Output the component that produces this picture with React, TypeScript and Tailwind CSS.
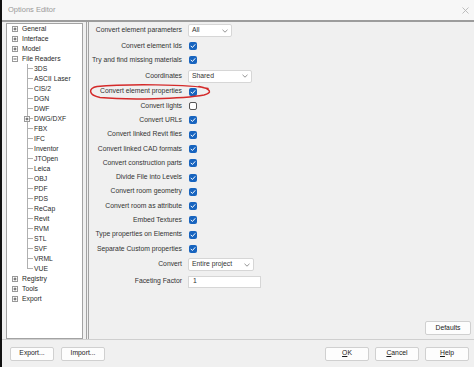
import React from "react"

const children = [
    "3DS", "ASCII Laser", "CIS/2", "DGN", "DWF", "DWG/DXF", "FBX", "IFC", "Inventor", "JTOpen",
    "Leica", "OBJ", "PDF", "PDS", "ReCap", "Revit", "RVM", "STL", "SVF", "VRML", "VUE",
]

type Row =
    | { kind: "check"; label: string; checked: boolean }
    | { kind: "select"; label: string; value: string; width: string }
    | { kind: "input"; label: string; value: string }

const rows: Row[] = [
    { kind: "select", label: "Convert element parameters", value: "All", width: "w-[44px]" },
    { kind: "check", label: "Convert element Ids", checked: true },
    { kind: "check", label: "Try and find missing materials", checked: true },
    { kind: "select", label: "Coordinates", value: "Shared", width: "w-[64px]" },
    { kind: "check", label: "Convert element properties", checked: true },
    { kind: "check", label: "Convert lights", checked: false },
    { kind: "check", label: "Convert URLs", checked: true },
    { kind: "check", label: "Convert linked Revit files", checked: true },
    { kind: "check", label: "Convert linked CAD formats", checked: true },
    { kind: "check", label: "Convert construction parts", checked: true },
    { kind: "check", label: "Divide File into Levels", checked: true },
    { kind: "check", label: "Convert room geometry", checked: true },
    { kind: "check", label: "Convert room as attribute", checked: true },
    { kind: "check", label: "Embed Textures", checked: true },
    { kind: "check", label: "Type properties on Elements", checked: true },
    { kind: "check", label: "Separate Custom properties", checked: true },
    { kind: "select", label: "Convert", value: "Entire project", width: "w-[66px]" },
    { kind: "input", label: "Faceting Factor", value: "1" },
]

const Expander = ({ open }: { open?: boolean }) => (
    <svg width="6" height="6" viewBox="0 0 6 6" className="shrink-0">
        <rect x="0.5" y="0.5" width="5" height="5" fill="white" stroke="#9a9a9a" strokeWidth="1" />
        <line x1="1.5" y1="3" x2="4.5" y2="3" stroke="#333" strokeWidth="0.8" />
        {!open && <line x1="3" y1="1.5" x2="3" y2="4.5" stroke="#333" strokeWidth="0.8" />}
    </svg>
)

const Checkbox = ({ checked }: { checked: boolean }) =>
    checked ? (
        <div className="w-[8px] h-[8px] rounded-[2px] bg-[#1764bf] flex items-center justify-center">
            <svg width="8" height="8" viewBox="0 0 8 8">
                <polyline points="2,4.1 3.4,5.5 6,2.6" fill="none" stroke="white" strokeWidth="1" strokeLinecap="round" strokeLinejoin="round" />
            </svg>
        </div>
    ) : (
        <div className="w-[8px] h-[8px] rounded-[2px] bg-white border border-[#555]" />
    )

const Chevron = () => (
    <svg width="6" height="4" viewBox="0 0 6 4">
        <polyline points="0.5,0.8 3,3.2 5.5,0.8" fill="none" stroke="#777" strokeWidth="0.8" />
    </svg>
)

const Button = ({ children, className = "" }: { children: React.ReactNode; className?: string }) => (
    <div className={`h-[14px] w-[44px] flex items-center justify-center bg-[#fdfdfd] border border-[#d0d0d0] rounded-[2px] text-[#1a1a1a] ${className}`}>
        {children}
    </div>
)

export default function App() {
    return (
        <div className="relative w-[474px] h-[367px] overflow-hidden bg-[#f0f0f0] border-l-2 border-[#111] text-[6.8px] text-[#2a2a2a] font-['Liberation_Sans',Arial,sans-serif] leading-none">
            {/* Title bar */}
            <div className="h-[22px] flex items-center justify-between bg-[#f7f7f7] border-b-2 border-[#9c9c9c] pl-[6px] pr-[5px]">
                <span className="text-[7.5px] text-[#9a9a9a]">Options Editor</span>
                <svg width="7" height="7" viewBox="0 0 7 7">
                    <path d="M0.5 0.5L6.5 6.5M6.5 0.5L0.5 6.5" stroke="#b5b5b5" strokeWidth="0.9" />
                </svg>
            </div>

            {/* Body */}
            <div className="h-[318px] flex border-b border-[#cfcfcf]">
                {/* Tree */}
                <div className="ml-[4px] mt-[1px] w-[77px] bg-white border border-[#a3a3a3] pl-[5px]">
                    {["General", "Interface", "Model"].map((t) => (
                        <div key={t} className="h-[10px] flex items-center gap-[4px]">
                            <Expander />
                            <span>{t}</span>
                        </div>
                    ))}
                    <div className="h-[10px] flex items-center gap-[4px]">
                        <Expander open />
                        <span>File Readers</span>
                    </div>
                    {children.map((t, i) => {
                        const last = i === children.length - 1
                        return (
                            <div key={t} className="h-[10px] flex items-center">
                                <div className="relative w-[6px] h-full ml-[15px] flex flex-col">
                                    <div className="h-1/2 border-l border-b border-[#b0b0b0]" />
                                    <div className={`h-1/2 ${last ? "" : "border-l border-[#b0b0b0]"}`} />
                                    {t === "DWG/DXF" && (
                                        <div className="absolute left-[-3px] top-[2px]">
                                            <Expander />
                                        </div>
                                    )}
                                </div>
                                <span className="ml-[1px]">{t}</span>
                            </div>
                        )
                    })}
                    {["Registry", "Tools", "Export"].map((t) => (
                        <div key={t} className="h-[10px] flex items-center gap-[4px]">
                            <Expander />
                            <span>{t}</span>
                        </div>
                    ))}
                </div>

                {/* Settings panel */}
                <div className="ml-[3px] flex-1 flex flex-col border-l-[3px] border-double border-[#a3a3a3] pr-[3px]">
                    <div className="flex flex-col text-[#333]">
                        {rows.map((r) => (
                            <div key={r.label} className={`flex items-center ${r.kind === "check" ? "h-[14.3px]" : "h-[17px]"}`}>
                                <div className="w-[93px] text-right whitespace-nowrap">{r.label}</div>
                                {r.kind === "check" && (
                                    <div className="ml-[7px]">
                                        <Checkbox checked={r.checked} />
                                    </div>
                                )}
                                {r.kind === "select" && (
                                    <div className={`ml-[6px] h-[13px] ${r.width} flex items-center justify-between bg-white border border-[#d6d6d6] rounded-[2px] pl-[3px] pr-[3px]`}>
                                        <span>{r.value}</span>
                                        <Chevron />
                                    </div>
                                )}
                                {r.kind === "input" && (
                                    <div className="ml-[6px] h-[12px] w-[73px] flex items-center bg-white border border-[#d6d6d6] pl-[4px]">
                                        {r.value}
                                    </div>
                                )}
                            </div>
                        ))}
                    </div>
                    <div className="mt-auto mb-[4px] self-end">
                        <Button className="w-[46px] h-[13px]">Defaults</Button>
                    </div>
                </div>
            </div>

            {/* Bottom buttons */}
            <div className="h-[27px] flex items-center justify-between pl-[8px] pr-[5px]">
                <div className="flex gap-[7px]">
                    <Button>Export...</Button>
                    <Button>Import...</Button>
                </div>
                <div className="flex gap-[6px]">
                    <Button className="border-[#5a83b5]">
                        <span className="underline">O</span>K
                    </Button>
                    <Button>
                        <span className="underline">C</span>ancel
                    </Button>
                    <Button>
                        <span className="underline">H</span>elp
                    </Button>
                </div>
            </div>

            {/* Red annotation circle */}
            <svg className="absolute left-0 top-0 pointer-events-none" width="474" height="367" viewBox="0 0 474 367">
                <path
                    d="M206 88.5 C190 84, 120 84, 95 86.5 C86 88, 86 95, 98 97.5 C125 100, 180 99, 202 95 C210 93, 210 89, 197 86.5"
                    fill="none"
                    stroke="#d42a2a"
                    strokeWidth="1.5"
                    strokeLinecap="round"
                />
            </svg>
        </div>
    )
}
